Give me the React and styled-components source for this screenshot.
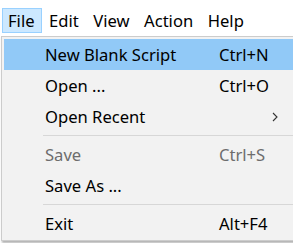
import React from 'react';
import styled, { createGlobalStyle } from 'styled-components';

const GlobalStyles = createGlobalStyle`
  body {
    margin: 0;
    background: #ffffff;
    font-family: 'Noto Sans', 'Open Sans', sans-serif;
    overflow: hidden;
  }
`;

const Page = styled.div`
  width: 293px;
  height: 243px;
  overflow: hidden;
`;

const MenuBar = styled.div`
  display: flex;
  align-items: flex-start;
  gap: 1.5px;
  height: 36px;
  padding: 8px 0 0 2px;
  box-sizing: border-box;
`;

const TopItem = styled.div`
  height: 25px;
  box-sizing: border-box;
  padding: 0 6px 0 5px;
  display: flex;
  align-items: center;
  font-size: 16.6px;
  color: #000;
  border: 1px solid ${p => (p.$open ? '#99d1ff' : 'transparent')};
  background: ${p => (p.$open ? '#cce8ff' : 'transparent')};
`;

const Dropdown = styled.div`
  margin-left: 1px;
  width: 310px;
  background: #f2f2f2;
  border: 1px solid #cccccc;
  padding: 2px 2px 1px 2px;
  box-shadow: 1px 2px 2px rgba(0, 0, 0, 0.3);
`;

const Item = styled.div`
  display: grid;
  grid-template-columns: 41px 174px 59px 1fr;
  align-items: center;
  height: 31px;
  font-size: 16.6px;
  color: ${p => (p.$disabled ? '#6d6d6d' : '#000')};
  background: ${p => (p.$active ? '#91c9f7' : 'transparent')};
`;

const Label = styled.span`
  grid-column: 2;
  white-space: nowrap;
`;

const Shortcut = styled.span`
  grid-column: 3;
  white-space: nowrap;
`;

const Arrow = styled.span`
  grid-column: 3;
  justify-self: end;
  display: flex;
`;

const Separator = styled.div`
  height: 7px;
  display: flex;
  align-items: center;
  padding-left: 39px;

  &::after {
    content: '';
    flex: 1;
    height: 1px;
    background: #d7d7d7;
  }
`;

const Chevron = () => (
  <svg width="6" height="10" viewBox="0 0 6 10">
    <path d="M1 1 L5 5 L1 9" fill="none" stroke="#333" strokeWidth="1.1" />
  </svg>
);

export default function App() {
  return (
    <Page>
      <GlobalStyles />
      <MenuBar>
        <TopItem $open>File</TopItem>
        <TopItem>Edit</TopItem>
        <TopItem>View</TopItem>
        <TopItem>Action</TopItem>
        <TopItem>Help</TopItem>
      </MenuBar>
      <Dropdown>
        <Item $active>
          <Label>New Blank Script</Label>
          <Shortcut>Ctrl+N</Shortcut>
        </Item>
        <Item>
          <Label>Open ...</Label>
          <Shortcut>Ctrl+O</Shortcut>
        </Item>
        <Item>
          <Label>Open Recent</Label>
          <Arrow><Chevron /></Arrow>
        </Item>
        <Separator />
        <Item $disabled>
          <Label>Save</Label>
          <Shortcut>Ctrl+S</Shortcut>
        </Item>
        <Item>
          <Label>Save As ...</Label>
        </Item>
        <Separator />
        <Item>
          <Label>Exit</Label>
          <Shortcut>Alt+F4</Shortcut>
        </Item>
      </Dropdown>
    </Page>
  );
}
